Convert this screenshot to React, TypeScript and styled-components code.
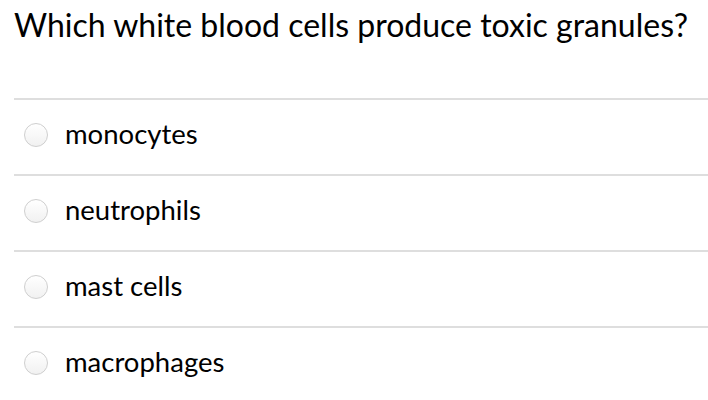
import React from "react";
import styled, { createGlobalStyle } from "styled-components";

const GlobalStyle = createGlobalStyle`
  body {
    margin: 0;
    background: #ffffff;
    font-family: Lato, "Open Sans", sans-serif;
    color: #000000;
  }
`;

const options: string[] = ["monocytes", "neutrophils", "mast cells", "macrophages"];

const Quiz = () => {
  return (
    <Root>
      <GlobalStyle />
      <Question>Which white blood cells produce toxic granules?</Question>
      <List>
        {options.map((item: string, index: number) => (
          <Row key={index}>
            <Radio />
            <Label>{item}</Label>
          </Row>
        ))}
      </List>
    </Root>
  );
};

export default Quiz;

const Root = styled.div`
  display: flex;
  flex-direction: column;
  padding: 6px 0 0 14px;
  width: 694px;
`;

const Question = styled.h1`
  margin: 0;
  font-size: 32px;
  font-weight: 400;
  line-height: 38px;
  white-space: nowrap;
`;

const List = styled.div`
  display: flex;
  flex-direction: column;
  margin-top: 54px;
`;

const Row = styled.label`
  display: flex;
  align-items: center;
  gap: 17px;
  height: 70px;
  padding: 0 0 4px 10px;
  border-top: 2px solid #dedede;
`;

const Radio = styled.span`
  width: 24px;
  height: 24px;
  box-sizing: border-box;
  border-radius: 50%;
  border: 1px solid #cfcfcf;
  background: linear-gradient(180deg, #ffffff 0%, #f1f1f1 100%);
  flex-shrink: 0;
`;

const Label = styled.span`
  font-size: 27.5px;
  line-height: 32px;
  margin-bottom: 3px;
`;
